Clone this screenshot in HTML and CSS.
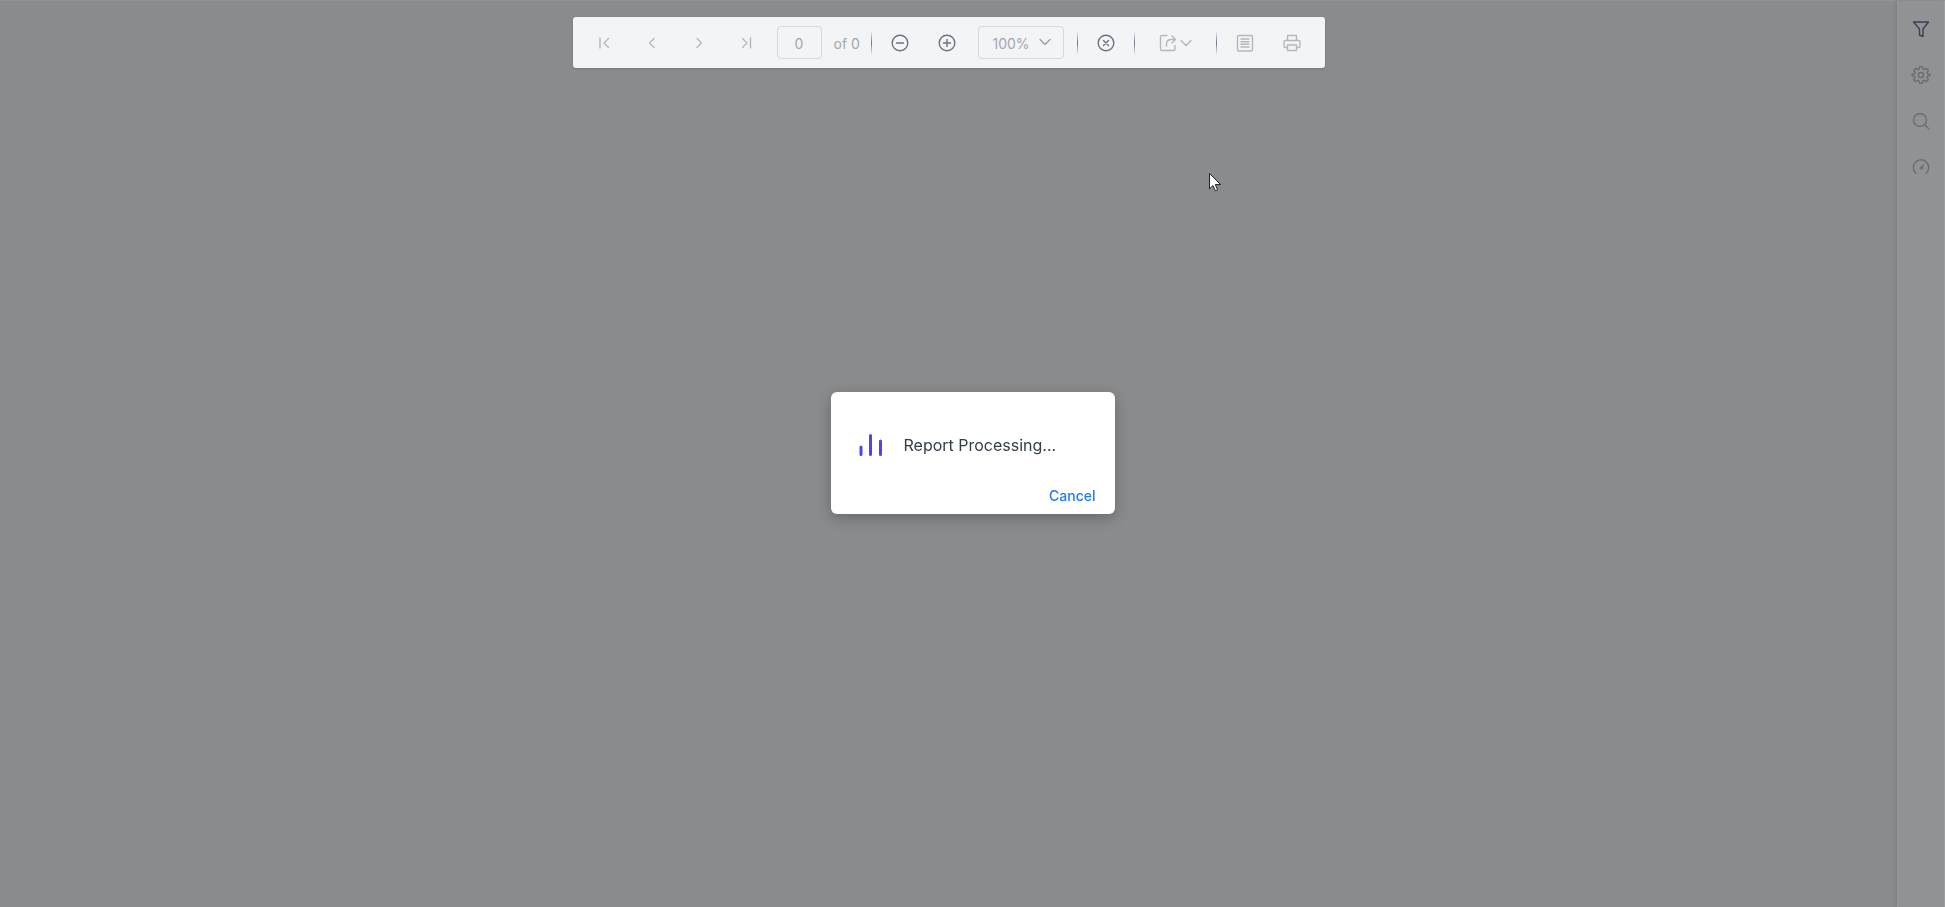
FILE: index.html
```
<!DOCTYPE html>
<html lang="en">
<head>
<meta charset="utf-8">
<title>Report Viewer</title>
<link rel="stylesheet" href="styles.css">
</head>
<body>
<div class="viewer">
  <main class="stage">
    <div class="toolbar" role="toolbar" aria-label="Report viewer">
      <button class="tool muted" aria-label="First page"><svg class="icon" viewBox="0 0 20 20"><path d="M5 5v10M13.500 5.500 9 10l4.500 4.500"/></svg></button>
      <button class="tool muted" aria-label="Previous page"><svg class="icon" viewBox="0 0 20 20"><path d="M12 5.500 7.500 10l4.500 4.500"/></svg></button>
      <button class="tool muted" aria-label="Next page"><svg class="icon" viewBox="0 0 20 20"><path d="M8 5.500l4.500 4.500L8 14.500"/></svg></button>
      <button class="tool muted" aria-label="Last page"><svg class="icon" viewBox="0 0 20 20"><path d="M6.500 5.500 11 10l-4.500 4.500M14.500 5v10"/></svg></button>
      <input class="page" type="text" value="0" aria-label="Page number">
      <span class="total">of 0</span>
      <span class="separator"></span>
      <button class="tool" aria-label="Zoom out"><svg class="icon" viewBox="0 0 20 20"><circle cx="10" cy="10" r="7.800"/><path d="M6.500 10h7"/></svg></button>
      <button class="tool" aria-label="Zoom in"><svg class="icon" viewBox="0 0 20 20"><circle cx="10" cy="10" r="7.800"/><path d="M6.500 10h7M10 6.500v7"/></svg></button>
      <span class="zoom">
        <select class="zoom-select" aria-label="Zoom"><option>100%</option></select>
        <svg class="zoom-arrow" viewBox="0 0 12 8"><path d="M1 1.500 6 6.500l5-5"/></svg>
      </span>
      <span class="separator after-zoom"></span>
      <button class="tool" aria-label="Cancel"><svg class="icon" viewBox="0 0 20 20"><circle cx="10" cy="10" r="7.800"/><path d="m7.500 7.500 5 5M12.500 7.500l-5 5"/></svg></button>
      <span class="separator before-export"></span>
      <button class="tool export muted" aria-label="Export"><svg class="icon" viewBox="0 0 20 20"><path d="M9 2.500H4A1.500 1.500 0 0 0 2.500 4v12A1.500 1.500 0 0 0 4 17.500h11.500A1.500 1.500 0 0 0 17 16v-3.500M8.500 13v-2c0-3 2-4.500 5-4.500h4M14 3l3.500 3.500L14 10"/></svg><svg class="arrow" viewBox="0 0 12 8"><path d="M1 1.500 6 6.500l5-5"/></svg></button>
      <span class="separator"></span>
      <button class="tool muted" aria-label="Print preview"><svg class="icon" viewBox="0 0 20 20"><rect x="2.500" y="2.500" width="15" height="15.500" rx="1.500"/><path d="M6 6h8M6 8.700h8M6 11.300h8M6 14h8"/></svg></button>
      <button class="tool muted" aria-label="Print"><svg class="icon" viewBox="0 0 20 20"><path d="M5.500 7.500V2.500h9v5M5.500 14.500H3.500A1.500 1.500 0 0 1 2 13V9a1.500 1.500 0 0 1 1.500-1.500h13A1.500 1.500 0 0 1 18 9v4a1.500 1.500 0 0 1-1.500 1.500h-2M5.500 12h9v5.500h-9z"/></svg></button>
    </div>
  </main>
  <aside class="sidebar">
    <button class="side active" aria-label="Filters"><svg class="icon" viewBox="0 0 20 20"><path d="M2.500 3h15l-5.500 7v7.500l-3.500-1.500v-6z"/></svg></button>
    <button class="side" aria-label="Parameters"><svg class="icon" viewBox="0 0 20 20"><circle cx="10" cy="10" r="2.600"/><path d="M8.600 1.700h2.800l.5 2.300 1.400.6 2-1.300 2 2-1.300 2 .6 1.400 2.300.5v1.600l-2.300.5-.6 1.400 1.300 2-2 2-2-1.300-1.400.6-.5 2.300H8.600L8.100 16l-1.400-.6-2 1.300-2-2 1.300-2-.6-1.400-2.300-.5V9.200l2.300-.5.6-1.400-1.300-2 2-2 2 1.300L8.100 4z"/></svg></button>
    <button class="side" aria-label="Search"><svg class="icon" viewBox="0 0 20 20"><circle cx="9" cy="9" r="6.500"/><path d="m13.700 13.700 4 4"/></svg></button>
    <button class="side" aria-label="Performance"><svg class="icon" viewBox="0 0 20 20"><path d="M4.800 16.200a7.700 7.700 0 1 1 10.400 0"/><path class="needle" d="m13.300 6.500-2 6.500-3-1.800z"/></svg></button>
  </aside>
</div>
<div class="overlay">
  <section class="dialog" role="dialog" aria-labelledby="status">
    <div class="status">
      <svg class="bars" viewBox="0 0 24 24"><path d="M2 14v7.500M11.500 2.500v19M21.500 8v13.500"/></svg>
      <span id="status">Report Processing...</span>
    </div>
    <button class="cancel">Cancel</button>
  </section>
</div>
<svg class="pointer" viewBox="0 0 12 19"><path d="M.5.800v15l3.500-3.200 2.300 5.200 2.300-1-2.300-5.200h5z"/></svg>
</body>
</html>
```
FILE: styles.css
```
* {
  box-sizing: border-box;
}

body {
  margin: 0;
  font-family: Inter, "Liberation Sans", sans-serif;
  background: #8a8b8d;
}

button {
  padding: 0;
  border: 0;
  background: none;
  color: inherit;
  font: inherit;
}

svg {
  display: block;
  flex: none;
  fill: none;
  stroke: currentColor;
  stroke-width: 1.4;
  stroke-linecap: round;
  stroke-linejoin: round;
}

.viewer {
  display: flex;
  min-height: 100vh;
  border-top: 1px solid #929395;
}

.stage {
  flex: 1;
  display: flex;
  justify-content: center;
  align-items: flex-start;
  padding-top: 16px;
}

.toolbar {
  display: flex;
  align-items: center;
  padding: 9px;
  border-radius: 3px;
  background: #f3f4f6;
  box-shadow: 0 1px 3px rgba(0, 0, 0, 0.15);
  color: #6b7280;
  font-size: 14px;
}

.tool {
  display: flex;
  align-items: center;
  justify-content: center;
  width: 47px;
  height: 33px;
}

.icon {
  width: 20px;
  height: 20px;
}

.muted {
  color: #b4b7bf;
}

.page {
  width: 45px;
  height: 33px;
  margin-left: 7px;
  padding: 2px 0 0;
  border: 1px solid #d5d8df;
  border-radius: 4px;
  background: transparent;
  color: #a3a6ac;
  font: inherit;
  text-align: center;
}

.total {
  width: 37px;
  margin-left: 12px;
  padding-top: 2px;
  color: #a3a6ac;
  white-space: nowrap;
}

.separator {
  width: 1px;
  height: 24px;
  margin-right: 5px;
  background: linear-gradient(transparent, #6b7280, transparent);
}

.after-zoom {
  margin-left: 13px;
}

.before-export {
  margin-left: 4px;
}

.zoom {
  position: relative;
  margin-left: 7px;
}

.zoom-select {
  display: block;
  width: 86px;
  height: 33px;
  padding: 2px 0 0 14px;
  border: 1px solid #d5d8df;
  border-radius: 4px;
  background: transparent;
  color: #a3a6ac;
  font: inherit;
  appearance: none;
}

.zoom-arrow {
  position: absolute;
  top: 12px;
  right: 13px;
  width: 12px;
  height: 8px;
  color: #9a9ea6;
  pointer-events: none;
}

.export {
  gap: 2px;
  width: 76px;
  padding-right: 6px;
}

.arrow {
  width: 12px;
  height: 8px;
}

.sidebar {
  display: flex;
  flex-direction: column;
  align-items: center;
  width: 48px;
  padding-top: 5px;
  border-left: 1px solid #959698;
  border-right: 1px solid #9d9ea0;
  background: #919294;
  box-shadow: -1px 0 4px rgba(0, 0, 0, 0.12);
}

.side {
  display: flex;
  align-items: center;
  justify-content: center;
  width: 100%;
  height: 46px;
  color: #6a6d73;
}

.active {
  color: #374151;
}

.needle {
  fill: currentColor;
  stroke: none;
}

.overlay {
  position: fixed;
  inset: 0;
  display: flex;
  align-items: center;
  justify-content: center;
  padding-bottom: 2px;
}

.dialog {
  display: flex;
  flex-direction: column;
  gap: 27px;
  width: 284px;
  padding: 41px 19px 6px 28px;
  border-radius: 6px;
  background: #fff;
  box-shadow: 0 4px 14px rgba(0, 0, 0, 0.25);
}

.status {
  display: flex;
  align-items: center;
  gap: 21px;
  color: #333d47;
  font-size: 16px;
  line-height: 24px;
}

.bars {
  width: 24px;
  height: 24px;
  color: #4f46e5;
  stroke-width: 3;
}

.cancel {
  align-self: flex-end;
  color: #1a7cff;
  font-size: 14px;
  font-weight: 500;
  line-height: 24px;
}

.pointer {
  position: absolute;
  left: 1209px;
  top: 173px;
  width: 12px;
  height: 19px;
  fill: #fff;
  stroke: #222;
  stroke-width: 1;
}
```
